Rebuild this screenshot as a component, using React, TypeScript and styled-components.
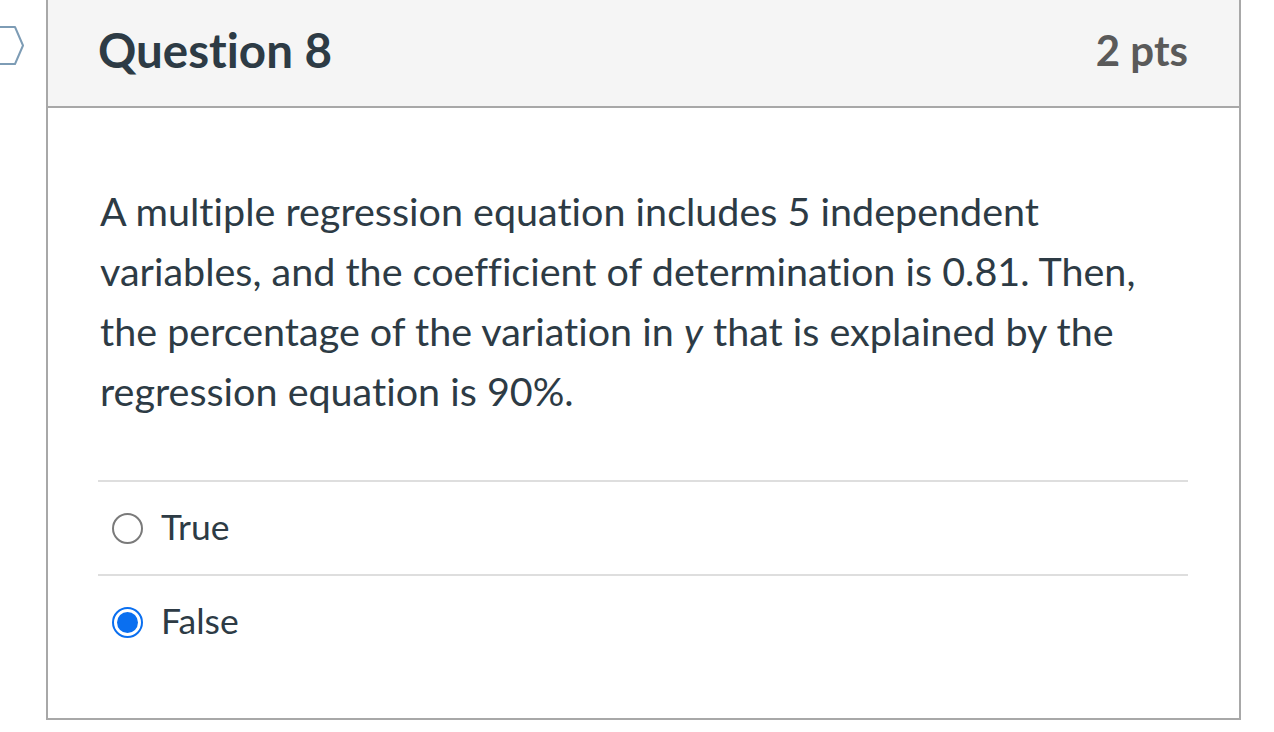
import styled, { createGlobalStyle } from "styled-components";

const GlobalStyle = createGlobalStyle`
  html, body {
    margin: 0;
    padding: 0;
    background: #ffffff;
  }
  body {
    font-family: Lato, "Open Sans", "Liberation Sans", sans-serif;
    color: #2d3b45;
    font-variant-ligatures: no-common-ligatures;
    overflow: hidden;
  }
`;

const Page = styled.div`
  display: flex;
  align-items: flex-start;
  width: 1274px;
  height: 732px;
`;

const Gutter = styled.div`
  width: 46px;
  flex-shrink: 0;
  height: 108px;
`;

const Card = styled.section`
  width: 1191px;
  border: 2px solid #a8a8a8;
  border-top: none;
  background: #ffffff;
`;

const Header = styled.header`
  display: flex;
  align-items: center;
  justify-content: space-between;
  box-sizing: border-box;
  height: 108px;
  padding: 0 51px 6px 50px;
  background: #f5f5f5;
  border-bottom: 2px solid #a8a8a8;
`;

const Title = styled.h2`
  margin: 0;
  font-size: 47.5px;
  font-weight: 700;
  color: #2d3b45;
  line-height: 1;
`;

const Points = styled.div`
  font-size: 42px;
  font-weight: 700;
  color: #5a5a5a;
  line-height: 1;
`;

const Body = styled.div`
  padding: 73px 51px 50px 50px;
`;

const QuestionText = styled.p`
  margin: 0 0 59px 2px;
  font-size: 39.5px;
  line-height: 60px;
  color: #2d3b45;

  em {
    font-style: italic;
  }
`;

const Answer = styled.label`
  display: flex;
  align-items: center;
  gap: 18px;
  height: 94px;
  padding: 0 0 4px 14px;
  box-sizing: border-box;
  border-top: 2px solid #dedede;
  font-size: 35.5px;
  color: #2d3b45;
  cursor: pointer;
`;

const Radio = styled.span<{ $checked?: boolean }>`
  position: relative;
  box-sizing: border-box;
  width: 31px;
  height: 31px;
  margin-top: 4px;
  border-radius: 50%;
  border: 2px solid ${(p) => (p.$checked ? "#0a6ff0" : "#7a7a7a")};
  background: #ffffff;
  flex-shrink: 0;

  &::after {
    content: "";
    position: absolute;
    inset: 3px;
    border-radius: 50%;
    background: ${(p) => (p.$checked ? "#0a6ff0" : "transparent")};
  }
`;

const Marker = () => (
  <svg width="46" height="108" viewBox="0 0 46 108">
    <polygon
      points="-10,27 15,27 23,45.5 15,64 -10,64"
      fill="#ffffff"
      stroke="#7d9cb5"
      strokeWidth="2"
      strokeLinejoin="round"
    />
  </svg>
);

const answers = [
  { label: "True", checked: false },
  { label: "False", checked: true },
];

export default function App() {
  return (
    <>
      <GlobalStyle />
      <Page>
        <Gutter>
          <Marker />
        </Gutter>
        <Card>
          <Header>
            <Title>Question 8</Title>
            <Points>2 pts</Points>
          </Header>
          <Body>
            <QuestionText>
              A multiple regression equation includes 5 independent variables,
              and the coefficient of determination is 0.81. Then, the
              percentage of the variation in <em>y</em> that is explained by
              the regression equation is 90%.
            </QuestionText>
            {answers.map((a) => (
              <Answer key={a.label}>
                <Radio $checked={a.checked} />
                {a.label}
              </Answer>
            ))}
          </Body>
        </Card>
      </Page>
    </>
  );
}
